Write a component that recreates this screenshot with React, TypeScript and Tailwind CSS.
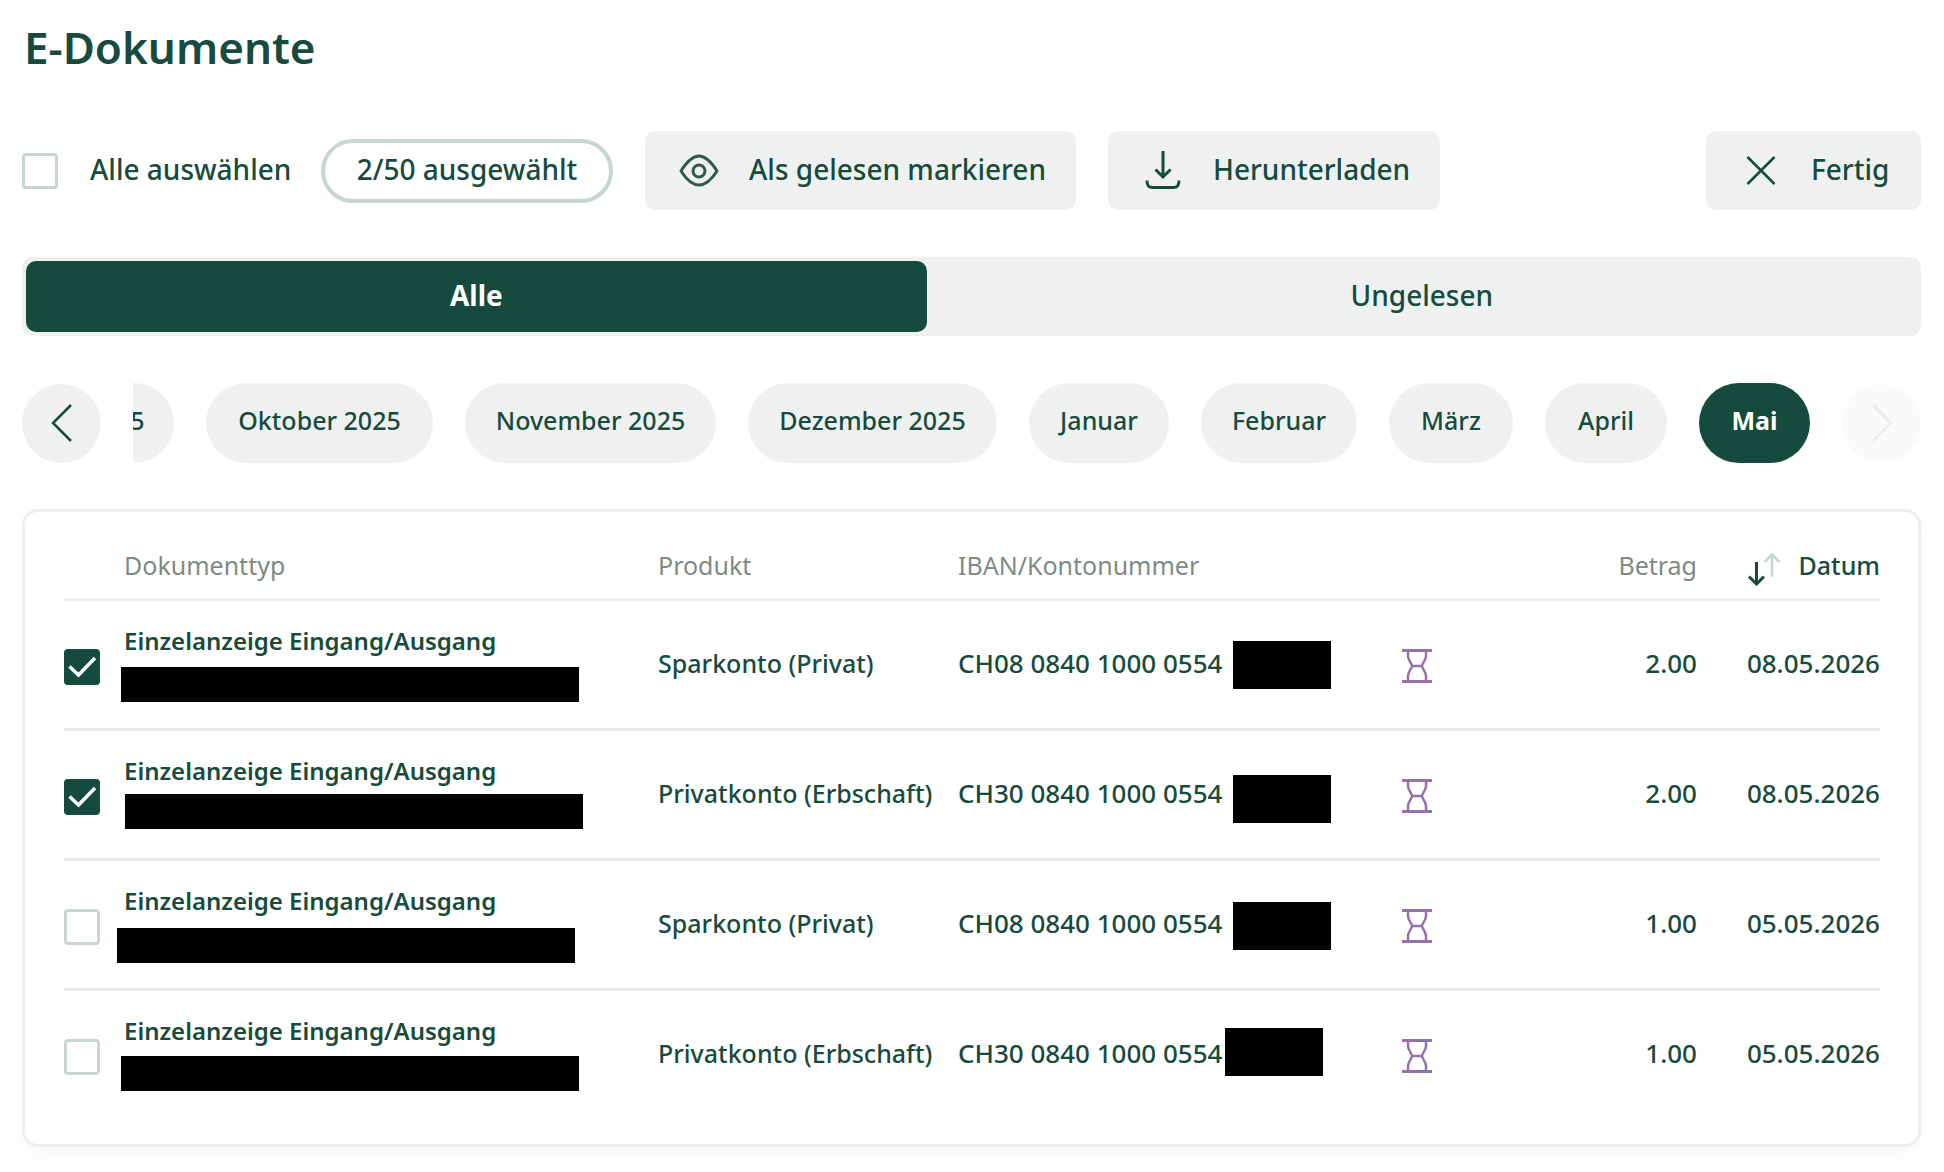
import { useState } from "react";
import type { ReactNode } from "react";

type Row = {
  product: string;
  iban: string;
  amount: string;
  date: string;
  nameMask: string;
  ibanMask: string;
};

const rows: Row[] = [
  {
    product: "Sparkonto (Privat)",
    iban: "CH08 0840 1000 0554",
    amount: "2.00",
    date: "08.05.2026",
    nameMask: "left-[-3px] top-[66px]",
    ibanMask: "left-[275px] top-[40px]",
  },
  {
    product: "Privatkonto (Erbschaft)",
    iban: "CH30 0840 1000 0554",
    amount: "2.00",
    date: "08.05.2026",
    nameMask: "left-[1px] top-[63px]",
    ibanMask: "left-[275px] top-[44px]",
  },
  {
    product: "Sparkonto (Privat)",
    iban: "CH08 0840 1000 0554",
    amount: "1.00",
    date: "05.05.2026",
    nameMask: "left-[-7px] top-[67px]",
    ibanMask: "left-[275px] top-[41px]",
  },
  {
    product: "Privatkonto (Erbschaft)",
    iban: "CH30 0840 1000 0554",
    amount: "1.00",
    date: "05.05.2026",
    nameMask: "left-[-3px] top-[65px]",
    ibanMask: "left-[267px] top-[37px]",
  },
];

const months = [
  { label: "September 2025", width: "w-[254px]" },
  { label: "Oktober 2025", width: "w-[227px]" },
  { label: "November 2025", width: "w-[251px]" },
  { label: "Dezember 2025", width: "w-[249px]" },
  { label: "Januar", width: "w-[140px]" },
  { label: "Februar", width: "w-[156px]" },
  { label: "März", width: "w-[124px]" },
  { label: "April", width: "w-[122px]" },
  { label: "Mai", width: "w-[111px]" },
];

function EyeIcon() {
  return (
    <svg width="40" height="40" viewBox="0 0 40 40" fill="none" stroke="#33594d" strokeWidth="3" strokeLinejoin="round" aria-hidden="true">
      <path d="M2 20C7 12 13 5 20 5S33 12 38 20C33 28 27 34 20 34S7 28 2 20Z" />
      <circle cx="20" cy="20" r="6" />
    </svg>
  );
}

function DownloadIcon() {
  return (
    <svg width="36" height="42" viewBox="0 0 36 42" fill="none" stroke="#174b3d" strokeWidth="3" aria-hidden="true">
      <path d="M18 1v25M10.500 19.500 18 27l7.500-7.500" />
      <path d="M2 30.500c0 5 1.500 7 5.500 7h21c4 0 5.500-2 5.500-7" />
    </svg>
  );
}

function CloseIcon() {
  return (
    <svg width="40" height="40" viewBox="0 0 40 40" fill="none" stroke="#174b3d" strokeWidth="2.500" aria-hidden="true">
      <path d="M6.500 6l27 27M33.500 6l-27 27" />
    </svg>
  );
}

function HourglassIcon() {
  return (
    <svg width="30" height="34" viewBox="0 0 30 34" fill="none" stroke="#9670ab" strokeWidth="2.500" role="img" aria-label="Ausstehend">
      <path d="M0 1.500h30M0 32.500h30" strokeWidth="3" />
      <path d="M6 2v5c0 4.500 4 7.500 4 10s-4 5.500-4 10v5M24 2v5c0 4.500-4 7.500-4 10s4 5.500 4 10v5M10 17h10" />
    </svg>
  );
}

function SortIcon() {
  return (
    <svg width="34" height="40" viewBox="0 0 34 40" fill="none" aria-hidden="true">
      <path d="M9.500 16v22M2 30.500 9.500 38l7.500-7.500" stroke="#174b3d" strokeWidth="3" />
      <path d="M25 31V8.500M17.500 16 25 8.500 32.500 16" stroke="#c6d5cf" strokeWidth="2.500" />
    </svg>
  );
}

function Chevron({ flip = false }: { flip?: boolean }) {
  return (
    <svg width="22" height="40" viewBox="0 0 22 40" fill="none" stroke="currentColor" strokeWidth="2.500" aria-hidden="true">
      <path d={flip ? "M2 2l18 18L2 38" : "M20 2 2 20l18 18"} />
    </svg>
  );
}

function Checkbox({ id, label, checked, onChange }: { id: string; label: string; checked: boolean; onChange: () => void }) {
  return (
    <span className="relative block size-9 shrink-0">
      <input
        id={id}
        type="checkbox"
        aria-label={label}
        checked={checked}
        onChange={onChange}
        className="block size-9 appearance-none rounded border-3 border-[#c8d6d1] bg-white checked:border-[#154b3c] checked:bg-[#154b3c]"
      />
      {checked && (
        <svg className="pointer-events-none absolute inset-0" width="36" height="36" viewBox="0 0 36 36" fill="none" stroke="#fff" strokeWidth="3.500" aria-hidden="true">
          <path d="M5.500 17.500 14.500 26 31 9" />
        </svg>
      )}
    </span>
  );
}

function ActionButton({ icon, children, className }: { icon: ReactNode; children: ReactNode; className: string }) {
  return (
    <button type="button" className={`flex h-[79px] items-center rounded-[10px] bg-[#eff1f1] whitespace-nowrap ${className}`}>
      {icon}
      <span className="pb-1">{children}</span>
    </button>
  );
}

export default function App() {
  const [selected, setSelected] = useState([true, true, false, false]);
  const [tab, setTab] = useState(0);
  const [month, setMonth] = useState(8);
  const toggle = (i: number) => setSelected(selected.map((s, j) => (j === i ? !s : s)));
  const all = selected.every(Boolean);
  const tabClass = (active: boolean) =>
    active
      ? "flex-auto rounded-[10px] bg-[#154b3c] pb-1 font-bold text-white"
      : "flex-auto rounded-[10px] pb-1";

  return (
    <main className="min-h-screen bg-white pt-[18px] pr-[23px] pb-5 pl-[22px] font-['Noto_Sans',sans-serif] text-[28px] font-medium text-[#174b3d]">
      <h1 className="pl-0.5 text-[44px] leading-[58px] font-semibold">E-Dokumente</h1>

      <div className="mt-[55px] flex items-center">
        <div className="flex items-center gap-8">
          <div className="flex items-center gap-8">
            <Checkbox id="select-all" label="Alle auswählen" checked={all} onChange={() => setSelected(selected.map(() => !all))} />
            <label htmlFor="select-all" className="w-[199px] pb-1 whitespace-nowrap">Alle auswählen</label>
          </div>
          <div className="flex h-16 w-[292px] items-center justify-center rounded-full border-4 border-[#c8d6d1] pb-1 whitespace-nowrap">
            2/50 ausgewählt
          </div>
          <ActionButton icon={<EyeIcon />} className="w-[431px] gap-[30px] pl-[34px]">Als gelesen markieren</ActionButton>
          <ActionButton icon={<DownloadIcon />} className="w-[332px] gap-8 pl-[37px]">Herunterladen</ActionButton>
        </div>
        <ActionButton icon={<CloseIcon />} className="ml-auto w-[215px] gap-[30px] pl-[35px]">Fertig</ActionButton>
      </div>

      <div className="mt-[47px] flex h-[79px] rounded-[10px] bg-[#eff1f1] p-1">
        <button type="button" className={tabClass(tab === 0)} onClick={() => setTab(0)}>Alle</button>
        <button type="button" className={tabClass(tab === 1)} onClick={() => setTab(1)}>Ungelesen</button>
      </div>

      <div className="mt-[47px] flex items-center gap-8 text-[25px]">
        <button type="button" aria-label="Frühere Monate" className="flex size-[79px] shrink-0 items-center justify-center rounded-full bg-[#eff1f1]">
          <Chevron />
        </button>
        <div className="flex min-w-0 flex-1 justify-end gap-8 overflow-hidden">
          {months.map((m, i) => (
            <button
              key={m.label}
              type="button"
              onClick={() => setMonth(i)}
              className={`h-20 shrink-0 rounded-full pb-1 whitespace-nowrap ${m.width} ${i === month ? "bg-[#154b3c] font-bold text-white" : "bg-[#eff1f1]"}`}
            >
              {m.label}
            </button>
          ))}
        </div>
        <button type="button" disabled aria-label="Spätere Monate" className="flex size-[79px] shrink-0 items-center justify-center rounded-full bg-[#fafafa] text-[#e9eeec]">
          <Chevron flip />
        </button>
      </div>

      <section className="mt-[46px] rounded-2xl border-3 border-[#ebf0ee] pt-[30px] pr-[38px] pb-[25px] pl-[39px] shadow-[0_8px_16px_rgba(0,0,0,0.03)]">
        <table className="w-full table-fixed border-collapse text-left text-[25px] whitespace-nowrap">
          <colgroup>
            <col className="w-[60px]" />
            <col />
            <col className="w-[300px]" />
            <col className="w-[444px]" />
            <col className="w-[100px]" />
            <col className="w-[195px]" />
            <col className="w-[183px]" />
          </colgroup>
          <thead>
            <tr className="h-[57px] border-b-3 border-[#ebf0ef] text-[#7d8b83]">
              <th></th>
              <th className="pb-2 font-normal">Dokumenttyp</th>
              <th className="pb-2 font-normal">Produkt</th>
              <th className="pb-2 font-normal">IBAN/Kontonummer</th>
              <th></th>
              <th className="pb-2 text-right font-normal">Betrag</th>
              <th className="pb-2 font-medium text-[#174b3d]">
                <button type="button" className="ml-auto flex w-[133px] items-center justify-between">
                  <SortIcon />
                  Datum
                </button>
              </th>
            </tr>
          </thead>
          <tbody>
            {rows.map((r, i) => (
              <tr key={i} className="h-[130px] border-b-3 border-[#e6ecea] align-top last:border-b-0">
                <td className="pt-12">
                  <Checkbox id={`row-${i}`} label={`Dokument ${i + 1} auswählen`} checked={selected[i]} onChange={() => toggle(i)} />
                </td>
                <td className="relative pt-6 text-2xl font-semibold">
                  Einzelanzeige Eingang/Ausgang
                  <span className={`absolute h-[35px] w-[458px] bg-black ${r.nameMask}`}></span>
                </td>
                <td className="pt-[44px]">{r.product}</td>
                <td className="relative pt-[43px] text-[26px]">
                  {r.iban}
                  <span className={`absolute h-12 w-[98px] bg-black ${r.ibanMask}`}></span>
                </td>
                <td className="pt-12">
                  <HourglassIcon />
                </td>
                <td className="pt-[43px] text-right text-[26px]">{r.amount}</td>
                <td className="pt-[43px] text-right text-[26px]">{r.date}</td>
              </tr>
            ))}
          </tbody>
        </table>
      </section>
    </main>
  );
}
